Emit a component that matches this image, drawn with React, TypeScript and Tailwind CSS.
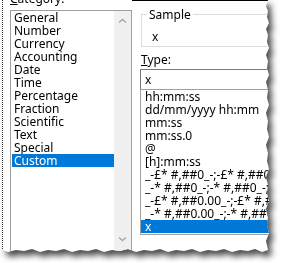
import React from "react";

const categories = [
  "General",
  "Number",
  "Currency",
  "Accounting",
  "Date",
  "Time",
  "Percentage",
  "Fraction",
  "Scientific",
  "Text",
  "Special",
  "Custom",
];

const formats = [
  "hh:mm:ss",
  "dd/mm/yyyy hh:mm",
  "mm:ss",
  "mm:ss.0",
  "@",
  "[h]:mm:ss",
  "_-£* #,##0_-;-£* #,##0_-;_-£* \"-\"_-;_-@_-",
  "_-* #,##0_-;-* #,##0_-;_-* \"-\"_-;_-@_-",
  "_-£* #,##0.00_-;-£* #,##0.00_-;_-£* \"-\"??_-;_-@_-",
  "_-* #,##0.00_-;-* #,##0.00_-;_-* \"-\"??_-;_-@_-",
  "x",
];

// jagged "torn paper" outline for the right and bottom edges
const tornEdge =
  "[clip-path:polygon(0_0,266px_0,264px_6px,266px_11px,265px_17px,267px_23px,264px_29px,266px_35px,265px_42px,267px_48px,264px_55px,266px_61px,265px_68px,267px_75px,264px_82px,266px_90px,265px_98px,267px_105px,264px_113px,266px_121px,265px_129px,267px_137px,264px_145px,266px_153px,265px_161px,267px_169px,264px_177px,266px_185px,265px_193px,267px_201px,264px_209px,266px_217px,265px_225px,267px_233px,264px_241px,266px_250px,260px_252px,253px_249px,246px_251px,238px_250px,230px_252px,222px_249px,214px_251px,206px_250px,198px_252px,190px_249px,182px_251px,174px_250px,166px_252px,158px_249px,150px_251px,142px_250px,134px_252px,126px_249px,118px_251px,110px_250px,102px_252px,94px_249px,86px_251px,78px_250px,70px_252px,62px_249px,54px_251px,46px_250px,38px_252px,30px_249px,22px_251px,14px_250px,6px_252px,0_250px)]";

function Chevron({ down }: { down?: boolean }) {
  return (
    <svg width="9" height="6" viewBox="0 0 9 6" className="block">
      <path
        d={down ? "M1 1.5 L4.5 4.5 L8 1.5" : "M1 4.5 L4.5 1.5 L8 4.5"}
        fill="none"
        stroke="#a6a6a6"
        strokeWidth="1.4"
      />
    </svg>
  );
}

export default function App() {
  return (
    <div
      className="w-[282px] h-[263px] bg-white overflow-hidden text-[12px] text-black"
      style={{ fontFamily: '"Noto Sans", "DejaVu Sans", sans-serif' }}
    >
      <div className="ml-[2px] w-fit drop-shadow-[4px_5px_3px_rgba(0,0,0,0.7)]">
        {/* torn-off piece of the Format Cells dialog */}
        <div
          className={
            "w-[268px] h-[253px] bg-white border-l border-dotted border-[#333] flex overflow-hidden " +
            tornEdge
          }
        >
          {/* Category column */}
          <div className="w-[129px] shrink-0 pl-[7px] flex flex-col">
            <div className="-mt-[8px] h-[13px] leading-[13px] whitespace-nowrap">
              <span className="underline">C</span>ategory:
            </div>
            <div className="mt-[5px] h-[260px] border border-[#a0a0a0] flex">
              <ul className="flex-1 flex flex-col">
                {categories.map((c) => (
                  <li
                    key={c}
                    className={
                      "ml-px pl-[2px] h-[13px] leading-[13px] whitespace-nowrap " +
                      (c === "Custom" ? "bg-[#0078d7] text-white" : "")
                    }
                  >
                    {c}
                  </li>
                ))}
              </ul>
              <div className="w-[17px] bg-[#f0f0f0] flex flex-col items-center justify-between pt-[7px] pb-[10px]">
                <Chevron />
                <Chevron down />
              </div>
            </div>
          </div>

          {/* Sample / Type column */}
          <div className="w-[150px] shrink-0 border-t border-black pl-[9px] flex flex-col">
            <div className="mt-[13px] relative h-[33px] border border-[#dcdcdc] pl-[10px] pt-[15px] leading-[13px]">
              <span className="absolute -top-[7px] left-[5px] bg-white px-[2px] leading-[13px]">
                Sample
              </span>
              x
            </div>
            <div className="mt-[6px] h-[13px] leading-[13px]">
              <span className="underline">T</span>ype:
            </div>
            <div className="mt-[3px] -ml-px h-[21px] border border-[#7a7a7a] pl-[4px] leading-[19px]">
              x
            </div>
            <ul className="-mt-px -ml-px h-[146px] border border-[#a0a0a0] flex flex-col overflow-hidden">
              {formats.map((f) => (
                <li
                  key={f}
                  className={
                    "pl-[4px] h-[13px] leading-[13px] whitespace-nowrap " +
                    (f === "x" ? "bg-[#0078d7] text-white" : "")
                  }
                >
                  {f}
                </li>
              ))}
            </ul>
          </div>
        </div>
      </div>
    </div>
  );
}
